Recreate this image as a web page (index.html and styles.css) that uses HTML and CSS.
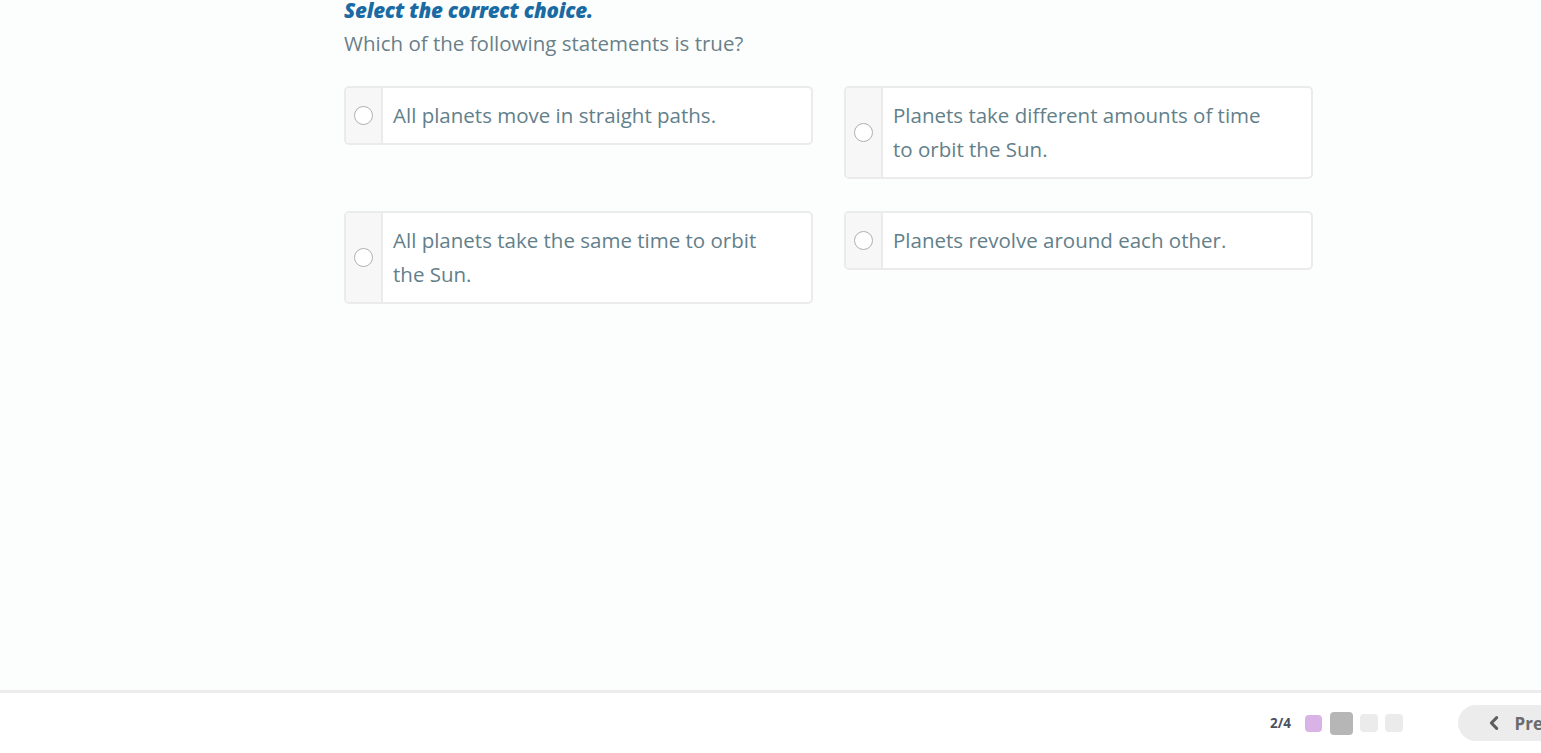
FILE: index.html
```html
<!DOCTYPE html>
<html lang="en">
<head>
    <meta charset="UTF-8">
    <meta name="viewport" content="width=device-width, initial-scale=1.0">
    <title>Question</title>
    <link rel="stylesheet" href="styles.css">
</head>
<body>

    <!-- Question area -->
    <div class="main">
        <div class="question">
            <h2 class="instruction">Select the correct choice.</h2>
            <p class="prompt">Which of the following statements is true?</p>

            <div class="choices">
                <label class="choice">
                    <span class="radio-col"><span class="radio"></span></span>
                    <span class="choice-text">All planets move in straight paths.</span>
                </label>
                <label class="choice">
                    <span class="radio-col"><span class="radio"></span></span>
                    <span class="choice-text">Planets take different amounts of time<br>to orbit the Sun.</span>
                </label>
                <label class="choice">
                    <span class="radio-col"><span class="radio"></span></span>
                    <span class="choice-text">All planets take the same time to orbit<br>the Sun.</span>
                </label>
                <label class="choice">
                    <span class="radio-col"><span class="radio"></span></span>
                    <span class="choice-text">Planets revolve around each other.</span>
                </label>
            </div>
        </div>
    </div>

    <!-- Footer -->
    <div class="footer">
        <span class="count">2/4</span>
        <div class="steps">
            <span class="step done"></span>
            <span class="step current"></span>
            <span class="step"></span>
            <span class="step"></span>
        </div>
        <button class="prev-btn">
            <svg width="12" height="16" viewBox="0 0 12 16"><path d="M9 2.5 L3.5 8 L9 13.5" fill="none" stroke="#5e5e5e" stroke-width="3.2" stroke-linecap="round" stroke-linejoin="round"/></svg>
            Previous
        </button>
    </div>

</body>
</html>
```

FILE: styles.css
```css
body {
    font-family: "Open Sans", Lato, sans-serif;
    margin: 0;
    padding: 0;
    overflow: hidden;
}

.main {
    display: flow-root;
    height: 690px;
    background-color: #fcfefe;
}

.question {
    margin-left: 344px;
    width: 969px;
}

.instruction {
    margin: -3px 0 0 0;
    font-size: 20.5px;
    line-height: 26px;
    font-weight: 800;
    font-style: italic;
    color: #1a6aa3;
    letter-spacing: -0.2px;
}

.prompt {
    margin: 7px 0 0 0;
    font-size: 20.5px;
    line-height: 26px;
    color: #6a7f88;
}

.choices {
    display: grid;
    grid-template-columns: 469px 469px;
    column-gap: 31px;
    row-gap: 32px;
    align-items: start;
    margin-top: 30px;
}

.choice {
    display: flex;
    border: 2px solid #ebebeb;
    border-radius: 5px;
    background-color: white;
    overflow: hidden;
    cursor: pointer;
}

.radio-col {
    width: 35px;
    flex-shrink: 0;
    display: flex;
    justify-content: center;
    align-items: center;
    background-color: #f7f7f7;
    border-right: 2px solid #ebebeb;
}

.radio {
    width: 17px;
    height: 17px;
    border: 1px solid #b0b0b0;
    border-radius: 50%;
    background-color: white;
}

.choice-text {
    padding: 10px 10px 11px 10px;
    font-size: 20.5px;
    line-height: 34px;
    color: #62808a;
}

.footer {
    height: 60px;
    border-top: 3px solid #ececec;
    background-color: white;
    display: flex;
    align-items: center;
    justify-content: flex-end;
    margin-right: -47px;
}

.count {
    font-size: 13.5px;
    font-weight: 700;
    color: #4a5262;
    margin-right: 14px;
}

.steps {
    display: flex;
    align-items: center;
    gap: 7px;
}

.step {
    width: 18px;
    height: 18px;
    border-radius: 4px;
    background-color: #ebebeb;
}

.step.done {
    width: 17px;
    height: 17px;
    background-color: #d9b3e6;
}

.step.current {
    width: 23px;
    height: 23px;
    background-color: #b6b6b6;
    margin-left: 1px;
}

.prev-btn {
    margin-left: 55px;
    width: 130px;
    height: 36px;
    padding: 0 0 0 30px;
    border: none;
    border-radius: 18px;
    background-color: #ececec;
    display: flex;
    align-items: center;
    gap: 15px;
    font-family: "Open Sans", sans-serif;
    font-size: 17px;
    font-weight: 700;
    color: #6b6b6b;
    cursor: pointer;
}
```
